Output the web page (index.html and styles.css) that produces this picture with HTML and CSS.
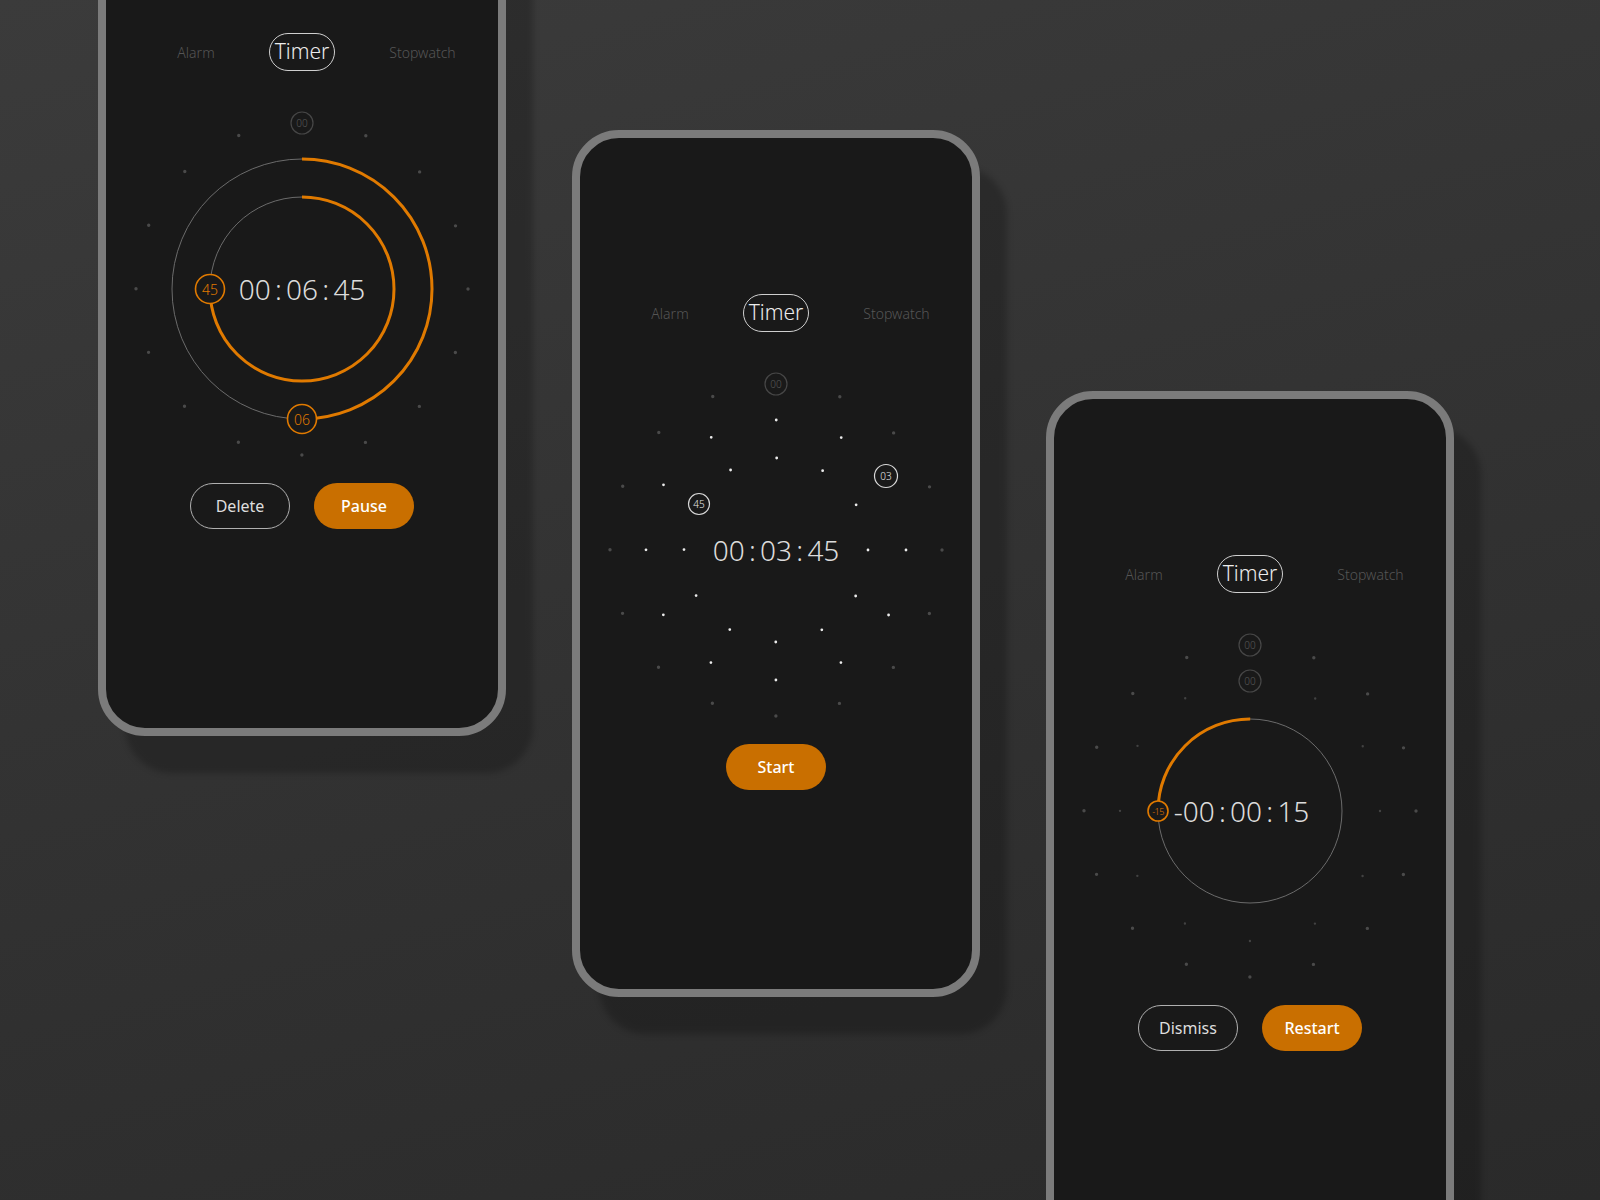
FILE: index.html
```html
<!DOCTYPE html>
<html lang="en">
<head>
    <meta charset="UTF-8">
    <meta name="viewport" content="width=device-width, initial-scale=1.0">
    <title>Timer</title>
    <link rel="stylesheet" href="styles.css">
</head>
<body>
<main class="desk">

  <!-- running timer -->
  <section class="phone phone--running">
    <div class="screen">
      <nav class="tabs">
        <span class="tab tab--left">Alarm</span>
        <span class="tab tab--active">Timer</span>
        <span class="tab tab--right">Stopwatch</span>
      </nav>
      <div class="dial">
        <svg viewBox="-180 -180 360 360" width="360" height="360">
          <circle class="dots" r="166" stroke-dasharray="0 65.188"/>
          <circle class="track" r="130"/>
          <circle class="arc" r="130" stroke-dasharray="408.4 2000" transform="rotate(-90)"/>
          <circle class="track" r="92"/>
          <circle class="arc" r="92" stroke-dasharray="433.5 2000" transform="rotate(-90)"/>
          <g class="mark mark--dim" transform="translate(0 -166)"><circle r="11"/><text>00</text></g>
          <g class="mark mark--accent mark--big" transform="translate(-92 0)"><circle r="14.5"/><text>45</text></g>
          <g class="mark mark--accent mark--big" transform="translate(0 130)"><circle r="14.5"/><text>06</text></g>
        </svg>
        <div class="readout">00 : 06 : 45</div>
      </div>
      <div class="actions">
        <button type="button" class="btn btn--ghost">Delete</button>
        <button type="button" class="btn btn--accent">Pause</button>
      </div>
    </div>
  </section>

  <!-- picking a time -->
  <section class="phone phone--idle">
    <div class="screen">
      <nav class="tabs">
        <span class="tab tab--left">Alarm</span>
        <span class="tab tab--active">Timer</span>
        <span class="tab tab--right">Stopwatch</span>
      </nav>
      <div class="dial">
        <svg viewBox="-180 -180 360 360" width="360" height="360">
          <circle class="dots" r="166" stroke-dasharray="0 65.188"/>
          <circle class="dots dots--lit" r="130" stroke-dasharray="0 68.068"/>
          <circle class="dots dots--lit" r="92" stroke-dasharray="0 48.171"/>
          <g class="mark mark--dim" transform="translate(0 -166)"><circle r="11"/><text>00</text></g>
          <g class="mark mark--lit" transform="translate(-77 -46)"><circle r="10.5"/><text>45</text></g>
          <g class="mark mark--lit" transform="translate(110 -74)"><circle r="11.5"/><text>03</text></g>
        </svg>
        <div class="readout">00 : 03 : 45</div>
      </div>
      <div class="actions">
        <button type="button" class="btn btn--accent">Start</button>
      </div>
    </div>
  </section>

  <!-- timer ran out -->
  <section class="phone phone--overtime">
    <div class="screen">
      <nav class="tabs">
        <span class="tab tab--left">Alarm</span>
        <span class="tab tab--active">Timer</span>
        <span class="tab tab--right">Stopwatch</span>
      </nav>
      <div class="dial">
        <svg viewBox="-180 -180 360 360" width="360" height="360">
          <circle class="dots" r="166" stroke-dasharray="0 65.188"/>
          <circle class="dots dots--small" r="130" stroke-dasharray="0 68.068"/>
          <circle class="track" r="92"/>
          <circle class="arc" r="92" stroke-dasharray="144.5 2000" transform="rotate(180)"/>
          <g class="mark mark--dim" transform="translate(0 -166)"><circle r="11"/><text>00</text></g>
          <g class="mark mark--dim" transform="translate(0 -130)"><circle r="11"/><text>00</text></g>
          <g class="mark mark--accent mark--tiny" transform="translate(-92 0)"><circle r="10"/><text>-15</text></g>
        </svg>
        <div class="readout readout--neg">-00 : 00 : 15</div>
      </div>
      <div class="actions">
        <button type="button" class="btn btn--ghost">Dismiss</button>
        <button type="button" class="btn btn--accent">Restart</button>
      </div>
    </div>
  </section>

</main>
</body>
</html>
```

FILE: styles.css
```css
body {
    margin: 0;
    width: 1600px;
    height: 1200px;
    overflow: hidden;
    font-family: "Noto Sans", "Open Sans", sans-serif;
    background: linear-gradient(165deg, #3b3b3b 0%, #333 45%, #2a2a2a 100%);
}

.desk {
    display: flex;
    align-items: flex-start;
    gap: 66px;
    padding-left: 98px;
    height: 1200px;
}

.phone {
    flex: none;
    width: 392px;
    height: 851px;
    border: 8px solid #7b7b7b;
    border-radius: 47px;
    background: #191919;
    box-shadow: 27px 37px 6px rgba(0, 0, 0, 0.22);
}

.phone--running {
    margin-top: -131px;
}

.phone--idle {
    margin-top: 130px;
}

.phone--overtime {
    margin-top: 391px;
}

.screen {
    display: flex;
    flex-direction: column;
    align-items: center;
    padding-top: 156px;
}

/* mode switcher */
.tabs {
    display: grid;
    grid-template-columns: 1fr auto 1fr;
    align-items: center;
    column-gap: 52px;
    width: 100%;
    height: 38px;
}

.tab {
    font-size: 14px;
    font-weight: 300;
    color: #555;
}

.tab--left {
    justify-self: end;
    margin-right: 2px;
}

.tab--right {
    justify-self: start;
    margin-left: 2px;
}

.tab--active {
    box-sizing: border-box;
    height: 38px;
    padding: 0 5px;
    border: 1.5px solid #cfcfcf;
    border-radius: 19px;
    font-size: 21px;
    line-height: 34px;
    color: #ececec;
}

/* dial */
.dial {
    position: relative;
    width: 360px;
    height: 360px;
    margin-top: 38px;
}

.dial svg {
    display: block;
}

.dots {
    fill: none;
    stroke: #4a4a4a;
    stroke-width: 3.4;
    stroke-linecap: round;
}

.dots--lit {
    stroke: #ececec;
    stroke-width: 2.8;
}

.dots--small {
    stroke: #424242;
    stroke-width: 2.4;
}

.track {
    fill: none;
    stroke: #6b6b6b;
    stroke-width: 1;
}

.arc {
    fill: none;
    stroke: #e07a00;
    stroke-width: 3;
}

.mark circle {
    fill: #191919;
    stroke-width: 1.2;
}

.mark text {
    font-family: "Noto Sans", sans-serif;
    font-size: 10px;
    font-weight: 300;
    text-anchor: middle;
    dominant-baseline: central;
}

.mark--dim circle {
    stroke: #474747;
}

.mark--dim text {
    fill: #585858;
}

.mark--lit circle {
    stroke: #d8d8d8;
}

.mark--lit text {
    fill: #e8e8e8;
}

.mark--accent circle {
    stroke: #e07a00;
    stroke-width: 1.6;
}

.mark--accent text {
    fill: #e07a00;
}

.mark--big text {
    font-size: 14px;
}

.mark--tiny text {
    font-size: 9px;
    letter-spacing: -0.5px;
}

.readout {
    position: absolute;
    left: 0;
    right: 0;
    top: 50%;
    transform: translateY(-50%);
    text-align: center;
    font-size: 28px;
    font-weight: 300;
    word-spacing: -3px;
    color: #dcdcdc;
}

.readout--neg {
    padding-right: 17px;
}

/* buttons */
.actions {
    display: flex;
    justify-content: center;
    gap: 24px;
    margin-top: 14px;
}

.btn {
    box-sizing: border-box;
    width: 100px;
    height: 46px;
    border-radius: 23px;
    font-family: "Noto Sans", sans-serif;
    font-size: 16px;
    cursor: pointer;
}

.btn--ghost {
    background: transparent;
    border: 1.5px solid #b0b0b0;
    color: #dedede;
}

.btn--accent {
    background: #c96f00;
    border: none;
    color: #fff;
    font-weight: 500;
}
```
